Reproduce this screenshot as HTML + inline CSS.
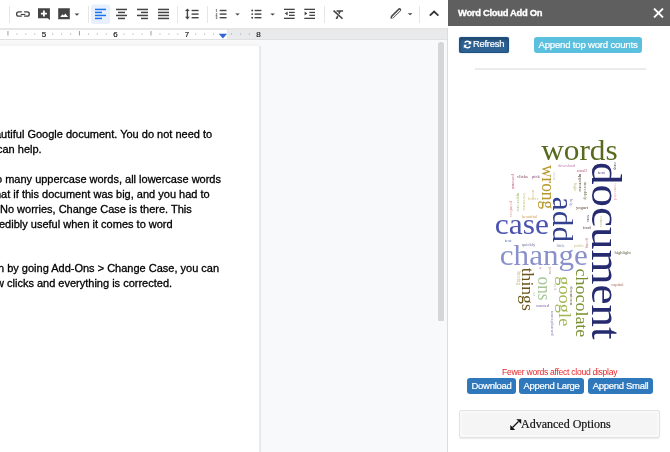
<!DOCTYPE html>
<html><head><meta charset="utf-8">
<style>
html,body{margin:0;padding:0;}
body{width:670px;height:452px;overflow:hidden;position:relative;background:#fff;font-family:"Liberation Sans",sans-serif;}
.abs,.dl,.btn,svg{will-change:transform;}
.abs{position:absolute;}
#toolbar{left:0;top:0;width:447px;height:28px;background:#fff;}
#rulerline{left:0;top:28px;width:447px;height:2px;background:#e6e6e6;}
#ruler{left:0;top:30px;width:447px;height:9px;background:#e9eaec;}
#rulerwhite{left:0;top:30px;width:227px;height:9px;background:#fff;}
#rulerbot{left:0;top:39px;width:447px;height:1px;background:#e0e0e0;}
#docbg{left:0;top:40px;width:447px;height:413px;background:#f8f9fa;}
#page{left:0;top:46px;width:259px;height:406px;background:#fff;}
#band{left:0;top:40px;width:259px;height:6px;background:linear-gradient(#fbfbfb,#f3f3f3);}
#pageedge{left:259px;top:46px;width:2px;height:406px;background:#e8e9eb;}
#scroll{left:437.6px;top:41.7px;width:5.6px;height:278.5px;background:#d6d6d6;border-radius:2.5px 2.5px 1px 1px;}
#sbtrack{left:447px;top:28px;width:1px;height:424px;background:#dadce0;}
.dl{position:absolute;left:0;font-size:11px;line-height:15px;color:#000;white-space:pre;-webkit-text-stroke:0.3px #000;}
#side{left:448px;top:0;width:222px;height:452px;background:#fff;}
#hdr{left:448px;top:0;width:222px;height:26px;background:#5f5f5f;}
#title{left:457.5px;top:6.7px;font-weight:bold;font-size:9.4px;letter-spacing:-0.28px;color:#fff;white-space:pre;line-height:11px;-webkit-text-stroke:0.35px #fff;}
.btn{position:absolute;color:#fff;font-size:9px;line-height:11px;text-align:center;white-space:pre;border-radius:3px;box-sizing:border-box;font-size:9.5px;letter-spacing:-0.3px;-webkit-text-stroke:0.2px #fff;}
#warn{left:501.6px;top:367px;font-size:8.6px;letter-spacing:-0.29px;color:#e8262a;white-space:pre;line-height:10px;}
#adv{left:459px;top:410px;width:201px;height:28px;background:#f5f5f5;border:1px solid #e3e3e3;border-radius:2px;box-sizing:border-box;box-shadow:0 1px 1px rgba(0,0,0,0.08),inset 0 0 0 2px #f9f9f9;}
#advtxt{left:521px;top:417px;font-family:"Liberation Serif",serif;font-size:12px;line-height:14px;color:#111;white-space:pre;-webkit-text-stroke:0.2px #111;}
.w{position:absolute;font-family:"Liberation Serif",serif;white-space:pre;line-height:1;transform-origin:0 0;}
</style></head><body>
<div id="toolbar" class="abs"></div>
<div id="rulerline" class="abs"></div>
<div id="ruler" class="abs"></div>
<div id="rulerwhite" class="abs"></div>
<div id="rulerbot" class="abs"></div>
<div id="docbg" class="abs"></div>
<div id="page" class="abs"></div>
<div id="band" class="abs"></div>
<div id="pageedge" class="abs"></div>
<div id="scroll" class="abs"></div>
<div id="sbtrack" class="abs"></div>

<!-- toolbar icons -->
<svg class="abs" style="left:0;top:0" width="447" height="28" viewBox="0 0 447 28">
  <g fill="#e6e6e6">
    <rect x="9" y="6" width="1" height="17"/>
    <rect x="88" y="6" width="1" height="17"/>
    <rect x="177" y="6" width="1" height="17"/>
    <rect x="207" y="6" width="1" height="17"/>
    <rect x="324" y="6" width="1" height="17"/>
    <rect x="419" y="6" width="1" height="17"/>
  </g>
  <rect x="91" y="4.5" width="19" height="19.5" rx="2" fill="#e8f0fe"/>
  <g fill="#444">
    <!-- link -->
    
    <!-- comment add -->
    <path d="M38 8.2h11.9v11.7l-2.3-1.7H38zM43 10.6v2.1h-2.1v1.8H43v2.1h1.8v-2.1h2.1v-1.8h-2.1v-2.1z" fill-rule="evenodd"/>
    <!-- image -->
    <path d="M58.2 8.2h11.6v11.1H58.2zM60.1 16.9L62.6 14.2L63.9 15.6L65.3 13.5L68.1 16.9z" fill-rule="evenodd"/>
    <path d="M74.6 13.6h4.6l-2.3 2.2z"/>
    <!-- align center -->
    <rect x="116" y="8.7" width="11" height="1.5"/><rect x="118" y="11.7" width="7" height="1.5"/><rect x="116" y="14.7" width="11" height="1.5"/><rect x="118" y="17.7" width="7" height="1.5"/>
    <!-- align right -->
    <rect x="137" y="8.7" width="11" height="1.5"/><rect x="141" y="11.7" width="7" height="1.5"/><rect x="137" y="14.7" width="11" height="1.5"/><rect x="141" y="17.7" width="7" height="1.5"/>
    <!-- justify -->
    <rect x="158" y="8.7" width="11" height="1.5"/><rect x="158" y="11.7" width="11" height="1.5"/><rect x="158" y="14.7" width="11" height="1.5"/><rect x="158" y="17.7" width="11" height="1.5"/>
    <!-- line spacing -->
    <path d="M187.4 8.4l2.4 2.6h-1.7v5.8h1.7l-2.4 2.6-2.4-2.6h1.7V11h-1.7z"/>
    <rect x="191.6" y="9.8" width="7" height="1.4"/><rect x="191.6" y="13.4" width="7" height="1.4"/><rect x="191.6" y="17" width="7" height="1.4"/>
    <!-- numbered list -->
    <g font-family="Liberation Sans" font-size="3.6" font-weight="bold"><text x="215.6" y="12">1</text><text x="215.6" y="15.6">2</text><text x="215.6" y="19.2">3</text></g>
    <rect x="219.7" y="9.8" width="6.8" height="1.4"/><rect x="219.7" y="13.4" width="6.8" height="1.4"/><rect x="219.7" y="17" width="6.8" height="1.4"/>
    <path d="M235.2 13.4h4.6l-2.3 2.2z"/>
    <!-- bulleted list -->
    <circle cx="252.2" cy="10.5" r="0.95"/><circle cx="252.2" cy="14.1" r="0.95"/><circle cx="252.2" cy="17.7" r="0.95"/>
    <rect x="254.6" y="9.8" width="6.8" height="1.4"/><rect x="254.6" y="13.4" width="6.8" height="1.4"/><rect x="254.6" y="17" width="6.8" height="1.4"/>
    <path d="M270.3 13.4h4.6l-2.3 2.2z"/>
    <!-- decrease indent -->
    <rect x="284" y="8.7" width="10.7" height="1.3"/><rect x="289" y="11.8" width="5.7" height="1.3"/><rect x="289" y="14.7" width="5.7" height="1.3"/><rect x="284" y="17.7" width="10.7" height="1.3"/>
    <path d="M287.6 11.6v4l-2.8-2z"/>
    <!-- increase indent -->
    <rect x="304.3" y="8.7" width="10.7" height="1.3"/><rect x="309.3" y="11.8" width="5.7" height="1.3"/><rect x="309.3" y="14.7" width="5.7" height="1.3"/><rect x="304.3" y="17.7" width="10.7" height="1.3"/>
    <path d="M304.6 11.6v4l2.8-2z"/>
    <!-- clear formatting -->
    <path d="M336.5 10.2h6.6v1.6h-2.4l-1.1 2.4-1.4-1.3.5-1.1h-2.2z"/>
    <path d="M333 11.2l1.1-1.1 9 8.1-1.1 1.1z"/>
    <path d="M337.2 15.2l1.3 1.2-1.1 2.6h-1.8z"/>
    <!-- pencil -->
    <path d="M398.4 8.6a1.6 1.6 0 0 1 2.3 2.3l-7.4 7.4-2.9.5.5-2.9zM399.3 9.7l-7.2 7.2-.2 1 1-.2 7.2-7.2a.6.6 0 0 0-.8-.8z" fill-rule="evenodd"/>
    <path d="M407.7 13.2h4.8l-2.4 2z"/>
  </g>
  <g fill="#1a73e8">
    <rect x="95" y="8.7" width="11" height="1.5"/><rect x="95" y="11.7" width="7" height="1.5"/><rect x="95" y="14.7" width="11" height="1.5"/><rect x="95" y="17.7" width="7" height="1.5"/>
  </g>
  <path d="M429.8 15.6l4.3-4 4.3 4" fill="none" stroke="#333" stroke-width="1.8"/>
  <g fill="none" stroke="#444" stroke-width="1.3"><path d="M21.8 11.8H18.8a2.2 2.2 0 0 0 0 4.4H21.8M24.1 11.8H27.1a2.2 2.2 0 0 1 0 4.4H24.1"/><path d="M20.7 14.5H25.3" stroke-width="1.2"/></g>
</svg>

<!-- ruler ticks -->
<svg class="abs" style="left:0;top:28px" width="447" height="12" viewBox="0 0 447 12">
  <g fill="#9aa0a6" id="ticks"><rect x="7.44" y="3" width="1" height="4.5"/><rect x="16.38" y="5.5" width="1" height="1"/><rect x="25.32" y="5.5" width="1" height="1"/><rect x="34.26" y="5.5" width="1" height="1"/><rect x="52.14" y="5.5" width="1" height="1"/><rect x="61.08" y="5.5" width="1" height="1"/><rect x="70.02" y="5.5" width="1" height="1"/><rect x="78.96" y="3" width="1" height="4.5"/><rect x="87.90" y="5.5" width="1" height="1"/><rect x="96.84" y="5.5" width="1" height="1"/><rect x="105.78" y="5.5" width="1" height="1"/><rect x="123.66" y="5.5" width="1" height="1"/><rect x="132.60" y="5.5" width="1" height="1"/><rect x="141.54" y="5.5" width="1" height="1"/><rect x="150.48" y="3" width="1" height="4.5"/><rect x="159.42" y="5.5" width="1" height="1"/><rect x="168.36" y="5.5" width="1" height="1"/><rect x="177.30" y="5.5" width="1" height="1"/><rect x="195.18" y="5.5" width="1" height="1"/><rect x="204.12" y="5.5" width="1" height="1"/><rect x="213.06" y="5.5" width="1" height="1"/><rect x="230.94" y="5.5" width="1" height="1"/><rect x="239.88" y="5.5" width="1" height="1"/><rect x="248.82" y="5.5" width="1" height="1"/></g>
  <g font-family="Liberation Sans" font-size="8" fill="#222" stroke="#222" stroke-width="0.2" text-anchor="middle">
    <text x="44" y="9">5</text><text x="115.5" y="9">6</text><text x="187" y="9">7</text><text x="258.5" y="9">8</text>
  </g>
  <path d="M218.8 5.8h8.2l-4.1 4.6z" fill="#2f66d6"/>
</svg>

<!-- doc text -->
<div class="dl" style="top:127px;left:-5.3px">autiful Google document. You do not need to</div>
<div class="dl" style="top:142px;left:-3px">can help.</div>
<div class="dl" style="top:172px;left:-3.7px">o many uppercase words, all lowercase words</div>
<div class="dl" style="top:187px;left:-4.6px">hat if this document was big, and you had to</div>
<div class="dl" style="top:202px;left:0px">No worries, Change Case is there. This</div>
<div class="dl" style="top:217px;left:-1px">edibly useful when it comes to word</div>
<div class="dl" style="top:261px;left:-2.5px">n by going Add-Ons &gt; Change Case, you can</div>
<div class="dl" style="top:276px;left:-4.3px">w clicks and everything is corrected.</div>

<!-- sidebar -->
<div id="side" class="abs"></div>
<div id="hdr" class="abs"></div>
<div id="title" class="abs">Word Cloud Add On</div>
<svg class="abs" style="left:653px;top:8px" width="11" height="10" viewBox="0 0 11 10"><path d="M1 0.5l9 9M10 0.5l-9 9" stroke="#fff" stroke-width="1.8"/></svg>

<div class="btn" style="left:459px;top:36.5px;width:50px;height:15.8px;background:#2d6193;box-shadow:inset 0 2px 3px rgba(0,0,0,0.28),0 0 1.5px rgba(60,120,200,0.5);border:1px solid #20507e;border-radius:1.5px"></div>
<div class="abs" style="left:472.8px;top:38.5px;font-size:9px;line-height:11px;color:#fff;white-space:pre;font-size:9.3px;letter-spacing:-0.2px;-webkit-text-stroke:0.2px #fff">Refresh</div>
<svg class="abs" style="left:463px;top:40px" width="9" height="9" viewBox="0 0 9 9"><path d="M7.3 3.4A3.1 3.1 0 0 0 1.7 2.6M1.7 5.6A3.1 3.1 0 0 0 7.3 6.4" fill="none" stroke="#fff" stroke-width="1.5"/><path d="M8.2 0.8v3.4H4.8z M0.8 8.2V4.8h3.4z" fill="#fff"/></svg>
<div class="btn" style="left:534px;top:36.5px;width:108px;height:15.5px;background:#5bc0de;padding-top:2px;font-size:9.6px;letter-spacing:-0.2px">Append top word counts</div>
<div class="abs" style="left:474.5px;top:67.5px;width:171px;height:1.6px;background:#ebebeb"></div>

<!--CLOUD-->
<svg class="abs" style="left:0;top:0" width="670" height="452" viewBox="0 0 670 452" font-family="Liberation Serif">
<text transform="translate(541.20 159.60) scale(0.9996 0.9539)" font-size="31.3" fill="#566b1e">words</text>
<text transform="translate(591.83 162.12) rotate(90) scale(1.0000 0.9587)" font-size="45.0" fill="#262a6e">document</text>
<text transform="translate(541.57 165.00) rotate(90) scale(0.9987 1.0365)" font-size="17.3" fill="#b8962a">wrong</text>
<text transform="translate(553.20 196.80) rotate(90) scale(0.9999 0.9691)" font-size="31.4" fill="#33408f">add</text>
<text transform="translate(494.74 234.41) scale(0.9997 0.9193)" font-size="31.5" fill="#4a53b0">case</text>
<text transform="translate(499.75 264.58) scale(1.0014 0.9522)" font-size="31.1" fill="#8a91ca">change</text>
<text transform="translate(521.71 267.72) rotate(90) scale(1.0014 1.0045)" font-size="17.6" fill="#6b5518">things</text>
<text transform="translate(537.6 276.62) rotate(90) scale(1.0006 1.12)" font-size="17.1" fill="#a6c697">ons</text>
<text transform="translate(559.4 276.17) rotate(90) scale(1.0026 0.86)" font-size="18.4" fill="#a0b850">google</text>
<text transform="translate(576.06 268.58) rotate(90) scale(1.0028 0.9192)" font-size="17.9" fill="#7a9030">chocolate</text>
<text x="517.3" y="178.3" font-size="4.5" fill="#7a3848">clicks</text>
<text x="531.9" y="178.3" font-size="4.6" fill="#80406a">pick</text>
<text x="527.9" y="200.2" font-size="4.5" fill="#d0c080">lower</text>
<text x="521.9" y="218.1" font-size="4.3" fill="#d0a060">beautiful</text>
<text x="558.2" y="166.8" font-size="4.3" fill="#c080b0">download</text>
<text x="576.8" y="171.6" font-size="4.6" fill="#c06080">small</text>
<text x="576" y="208.8" font-size="4.6" fill="#604030">yogurt</text>
<text x="583" y="228.8" font-size="4.2" fill="#403030">food</text>
<text x="598" y="174" font-size="4.6" fill="#404080">text</text>
<text x="614.4" y="254" font-size="4.5" fill="#5a5a40">highlight</text>
<text x="611.3" y="286.4" font-size="4.6" fill="#a87060">capital</text>
<text x="504.7" y="241.5" font-size="4.6" fill="#6070b0">text</text>
<text x="521.7" y="245.5" font-size="4.5" fill="#7070a0">quickly</text>
<text x="556.6" y="247.2" font-size="4.5" fill="#8090b0">little</text>
<text x="574" y="247" font-size="4" fill="#d0c890">public</text>
<text x="536" y="307" font-size="4.5" fill="#8060a0">wanted</text>
<text transform="translate(512 174.3) rotate(90)" font-size="4.5" fill="#c06080">personal</text>
<text transform="translate(509.5 200.9) rotate(90)" font-size="4.5" fill="#e09090">pointless</text>
<text transform="translate(516.5 192.9) rotate(90)" font-size="4.5" fill="#a0c070">upper case</text>
<text transform="translate(522.5 193) rotate(90)" font-size="4.5" fill="#c8c070">lowercase</text>
<text transform="translate(531.5 190) rotate(90)" font-size="4.5" fill="#d0c080">need</text>
<text transform="translate(579 174) rotate(90)" font-size="4.5" fill="#504030">uppercase</text>
<text transform="translate(583.5 181.7) rotate(90)" font-size="4.5" fill="#707050">incredibly</text>
<text transform="translate(573.5 183) rotate(90)" font-size="4.5" fill="#d0d0a0">big</text>
<text transform="translate(569.5 198.8) rotate(90)" font-size="4.5" fill="#a090c0">help</text>
<text transform="translate(586.5 215) rotate(90)" font-size="4.5" fill="#404060">was</text>
<text transform="translate(614 162.3) rotate(90)" font-size="4.5" fill="#404060">easy</text>
<text transform="translate(613.5 183.2) rotate(90)" font-size="4.5" fill="#e0a0b0">corrected</text>
<text transform="translate(600 215.7) rotate(90)" font-size="4.5" fill="#c0c080">comes</text>
<text transform="translate(516.5 271.5) rotate(90)" font-size="5.2" fill="#c8b880">boring</text>
<text transform="translate(538.5 267) rotate(90)" font-size="4.5" fill="#e0a0c0">tt</text>
<text transform="translate(548.5 267) rotate(90)" font-size="4.5" fill="#c09090">you</text>
<text transform="translate(551.3 311) rotate(90)" font-size="5" fill="#8080c0">unexplained</text>
<text transform="translate(570.2 286.3) rotate(90)" font-size="4.5" fill="#706050">downtown</text>
<text transform="translate(552.8 171.8) rotate(90)" font-size="4.5" fill="#c0d0e0">faint</text>
<text transform="translate(573.5 183) rotate(90)" font-size="4.5" fill="#d8d8a8">light</text>
<text transform="translate(586 238) rotate(90)" font-size="4.5" fill="#c89090">going</text>
<text transform="translate(533.2 292) rotate(90)" font-size="4.3" fill="#b8c0a8">so</text>
<text transform="translate(554.3 284) rotate(90)" font-size="4.3" fill="#c0b0b8">is it</text>
</svg>
<!--/CLOUD-->

<div id="warn" class="abs">Fewer words affect cloud display</div>
<div class="btn" style="left:467px;top:378px;width:49px;height:16px;background:#2f78bb;padding-top:2px">Download</div>
<div class="btn" style="left:519px;top:378px;width:65px;height:16px;background:#2f78bb;padding-top:2px">Append Large</div>
<div class="btn" style="left:588px;top:378px;width:65px;height:16px;background:#2f78bb;padding-top:2px">Append Small</div>

<div id="adv" class="abs"></div>
<svg class="abs" style="left:509.5px;top:418.5px" width="12" height="12" viewBox="0 0 12 12"><path d="M2.5 8.5l6-6" stroke="#111" stroke-width="1.3"/><path d="M6.3 0.2h4.9v4.9zM0.3 6.1v4.9h4.9z" fill="#111"/></svg>
<div id="advtxt" class="abs">Advanced Options</div>
</body></html>
